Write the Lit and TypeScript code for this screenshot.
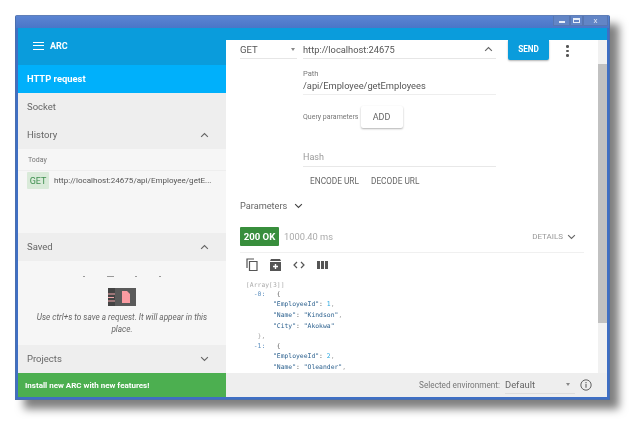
import { LitElement, html, css } from "lit";
import { customElement } from "lit/decorators.js";

const chev = (up: boolean, cls = "chev") => html`<svg class=${cls} viewBox="0 0 12 8"><path d=${up ? "M1.5 6.5 6 2l4.5 4.5" : "M1.5 1.5 6 6l4.5-4.5"} fill="none" stroke="currentColor" stroke-width="1.5"/></svg>`;

@customElement("app-root")
export class AppRoot extends LitElement {
  static styles = css`
    :host { display: block; width: 640px; height: 429px; background: #fff; padding: 15px 0 0 15px; box-sizing: border-box; overflow: hidden; font-family: Roboto, "Liberation Sans", sans-serif; color: #555; }
    .win { width: 595px; height: 385px; box-sizing: border-box; background: #3f6fc4; border: 1px solid #4a6fae; border-top-color: #5f7fb8; border-radius: 2px 2px 0 0; padding: 0 2px 2px 2px; display: flex; flex-direction: column; box-shadow: 9px 9px 9px rgba(0,0,0,.5); filter: blur(.4px); }
    .title { height: 12px; flex: none; display: flex; justify-content: flex-end; background: linear-gradient(#5b84d2, #4a76c8); margin: 0 -2px; padding-right: 1px; }
    .wbtn { height: 10px; background: #6285c6; border: 1px solid #5676b2; border-top: 0; box-sizing: border-box; display: flex; align-items: center; justify-content: center; color: #dfe7f5; font-size: 8px; line-height: 1; }
    .wbtn.min { width: 17px; } .wbtn.max { width: 13px; } .wbtn.cls { width: 25px; }
    .wbtn i { display: block; background: #e8eef8; }
    .wbtn.min i { width: 6px; height: 2px; margin-top: 3px; }
    .wbtn.max i { width: 7px; height: 5px; background: none; border: 1px solid #e8eef8; border-top-width: 2px; box-sizing: border-box; }
    .app { flex: 1; min-height: 0; display: flex; }
    .side { width: 208px; flex: none; display: flex; flex-direction: column; background: #f6f6f6; }
    .brand { height: 37px; flex: none; background: #0a9cdc; color: #fff; display: flex; align-items: center; padding: 0 0 1px 15px; gap: 6px; font-size: 9px; font-weight: 700; box-sizing: border-box; }
    .burger { width: 11px; height: 8px; border-top: 1.5px solid #fff; border-bottom: 1.5px solid #fff; position: relative; box-sizing: border-box; }
    .burger::after { content: ""; position: absolute; left: 0; right: 0; top: 1.75px; height: 1.5px; background: #fff; }
    .nav { height: 28px; flex: none; display: flex; align-items: center; justify-content: space-between; padding: 0 17px 1px 9px; background: #eee; font-size: 9.5px; color: #666; box-sizing: border-box; }
    .nav.active { background: #00b0fb; color: #fff; font-weight: 700; font-size: 9.4px; }
    .chev { width: 9px; height: 6px; color: #666; flex: none; display: block; }
    .hist { height: 84px; flex: none; box-sizing: border-box; }
    .today { height: 22px; box-sizing: border-box; border-bottom: 1px solid #eee; font-size: 7px; color: #777; display: flex; align-items: center; padding: 0 0 0 10px; }
    .item { display: flex; align-items: center; padding: 1px 0 0 9px; gap: 5px; font-size: 8.05px; color: #555; white-space: nowrap; }
    .badge { width: 22px; height: 17px; background: #d9ead9; color: #3f8f4f; font-size: 9px; display: flex; align-items: center; justify-content: center; border-radius: 1px; }
    .saved { height: 84px; flex: none; display: flex; flex-direction: column; align-items: center; color: #666; font-style: italic; font-size: 8.2px; line-height: 11.5px; text-align: center; padding: 14px 14px 0; box-sizing: border-box; }
    .marks { display: flex; height: 2px; width: 78px; justify-content: space-between; align-items: center; }
    .marks i { display: block; height: 1px; width: 2px; background: #999; }
    .marks i.w { width: 7px; }
    .pic { display: block; width: 28px; height: 18px; margin: 11px 0 6px; }
    .promo { flex: 1; background: #4caf50; color: #fff; font-size: 8px; font-weight: 700; display: flex; align-items: center; padding: 0 0 0 7px; }
    .main { flex: 1; min-width: 0; display: flex; flex-direction: column; background: #0a9cdc; }
    .band { height: 12px; flex: none; background: #0a9cdc; }
    .body { flex: 1; min-height: 0; display: flex; background: #fff; }
    .content { flex: 1; min-width: 0; overflow: hidden; padding-left: 14px; display: flex; flex-direction: column; align-items: flex-start; box-sizing: border-box; }
    .scroll { width: 9px; flex: none; background: #f1f1f1; padding-top: 24px; box-sizing: border-box; }
    .thumb { height: 259px; background: #c1c1c1; }
    .r1 { display: flex; height: 20px; flex: none; align-items: flex-start; }
    .sel { width: 57px; height: 19px; border-bottom: 1px solid #e6e6e6; box-sizing: border-box; display: flex; align-items: center; justify-content: space-between; font-size: 9.5px; padding-right: 2px; }
    .tri { width: 0; height: 0; border: 2.5px solid transparent; border-top: 3px solid #888; border-bottom: 0; display: block; }
    .url { width: 193px; height: 19px; margin-left: 6px; border-bottom: 1px solid #e6e6e6; box-sizing: border-box; display: flex; align-items: center; justify-content: space-between; font-size: 9.3px; padding-right: 3px; }
    .send { width: 41px; height: 20px; margin-left: 12px; background: #0a9cdc; color: #fff; border-radius: 0 0 2px 2px; font-size: 8.2px; font-weight: 700; display: flex; align-items: center; justify-content: center; box-shadow: 0 1px 2px rgba(0,0,0,.3); padding-bottom: 2px; box-sizing: border-box; }
    .kebab { width: 3px; margin: 5px 0 0 17px; display: flex; flex-direction: column; gap: 2px; }
    .kebab i { display: block; width: 2.6px; height: 2.6px; border-radius: 50%; background: #555; }
    .fields { margin-left: 63px; width: 193px; display: flex; flex-direction: column; }
    .lab { font-size: 7.5px; color: #777; margin-top: 9px; line-height: 9px; }
    .val { height: 17px; line-height: 15px; font-size: 9.3px; border-bottom: 1px solid #eee; box-sizing: border-box; }
    .qp { display: flex; align-items: center; height: 22px; margin-top: 11px; font-size: 7px; color: #777; }
    .add { width: 42px; height: 22px; margin-left: 2px; background: #fff; box-shadow: 0 1px 2px rgba(0,0,0,.3); border-radius: 2px; display: flex; align-items: center; justify-content: center; font-size: 9px; color: #666; }
    .hash { margin-top: 21px; height: 18px; line-height: 17px; font-size: 9px; color: #999; border-bottom: 1px solid #e8e8e8; box-sizing: border-box; }
    .enc { display: flex; gap: 12px; margin: 9px 0 0 7px; font-size: 8.3px; color: #666; line-height: 11px; }
    .params { display: flex; align-items: center; gap: 7px; font-size: 9.2px; color: #666; margin-top: 13px; line-height: 12px; }
    .params .chev { color: #444; }
    .status { width: 344px; height: 25px; margin-top: 15px; border-bottom: 1px solid #f0f0f0; display: flex; align-items: flex-start; font-size: 9.3px; color: #aaa; flex: none; box-sizing: content-box; }
    .ok { width: 39px; height: 19px; background: #388e3c; color: #fff; font-size: 9.6px; font-weight: 700; display: flex; align-items: center; justify-content: center; border-radius: 1px; margin-right: 5px; }
    .ms { line-height: 19px; }
    .det { margin-left: auto; margin-right: 8px; font-size: 8px; color: #999; display: flex; align-items: center; gap: 4px; height: 19px; }
    .det .chev { color: #666; }
    .tools { display: flex; align-items: center; gap: 12px; margin: 5px 0 0 6px; height: 13px; flex: none; color: #555; }
    .tools svg { display: block; flex: none; }
    .json { margin: 10px 0 0 6px; font-family: "DejaVu Sans Mono", "Liberation Mono", monospace; font-size: 6.4px; line-height: 10.8px; color: #666; }
    .json div { white-space: pre; }
    .json .h9 { line-height: 9px; }
    .k { color: #2f6390; } .n { color: #29a8e0; } .s { color: #2f6390; } .m { color: #aaa; } .i { color: #5c8fbf; } .b { color: #666; }
    .foot { height: 24px; flex: none; background: #eee; display: flex; align-items: center; justify-content: flex-end; font-size: 8.2px; color: #777; padding-right: 15px; box-sizing: border-box; }
    .env { width: 70px; height: 17px; margin: 0 5px; border-bottom: 1px solid #ddd; box-sizing: border-box; display: flex; align-items: center; justify-content: space-between; font-size: 9.4px; color: #666; padding-right: 5px; }
    .info { display: block; width: 12px; height: 12px; }
  `;

  render() {
    return html`
      <div class="win">
        <div class="title">
          <div class="wbtn min"><i></i></div><div class="wbtn max"><i></i></div><div class="wbtn cls">x</div>
        </div>
        <div class="app">
          <aside class="side">
            <div class="brand"><div class="burger"></div><span>ARC</span></div>
            <div class="nav active">HTTP request</div>
            <div class="nav">Socket</div>
            <div class="nav">History ${chev(true)}</div>
            <div class="hist">
              <div class="today">Today</div>
              <div class="item"><span class="badge">GET</span><span>http://localhost:24675/api/Employee/getE...</span></div>
            </div>
            <div class="nav">Saved ${chev(true)}</div>
            <div class="saved">
              <div class="marks"><i></i><i class="w"></i><i></i><i></i></div>
              <svg class="pic" viewBox="0 0 28 18">
                <rect width="28" height="18" fill="#5a5a5a"/>
                <rect width="7" height="18" fill="#444"/>
                <path d="M0 6h7M0 9.5h6M0 13h7" stroke="#f4a7ab" stroke-width="1.2"/>
                <path d="M14 3h5l3 3v9h-8z" fill="#fb9ca2"/>
              </svg>
              <div>Use ctrl+s to save a request. It will appear in this place.</div>
            </div>
            <div class="nav">Projects ${chev(false)}</div>
            <div class="promo">Install new ARC with new features!</div>
          </aside>
          <section class="main">
            <div class="band"></div>
            <div class="body">
              <div class="content">
                <div class="r1">
                  <div class="sel"><span>GET</span><i class="tri"></i></div>
                  <div class="url"><span>http://localhost:24675</span>${chev(true)}</div>
                  <div class="send">SEND</div>
                  <div class="kebab"><i></i><i></i><i></i></div>
                </div>
                <div class="fields">
                  <div class="lab">Path</div>
                  <div class="val">/api/Employee/getEmployees</div>
                  <div class="qp">Query parameters<div class="add">ADD</div></div>
                  <div class="hash">Hash</div>
                  <div class="enc"><span>ENCODE URL</span><span>DECODE URL</span></div>
                </div>
                <div class="params">Parameters ${chev(false)}</div>
                <div class="status">
                  <div class="ok">200 OK</div><div class="ms">1000.40 ms</div>
                  <div class="det">DETAILS ${chev(false)}</div>
                </div>
                <div class="tools">
                  <svg width="12" height="13" viewBox="0 0 12 13"><path d="M1 10V1h7M3.5 3.5h7.5v9H3.5z" fill="none" stroke="currentColor" stroke-width="1.2"/></svg>
                  <svg width="11" height="12" viewBox="0 0 11 12"><path d="M0 3h11v9H0zM1 0h9l1 2H0z" fill="#555"/><path d="M5.5 5v5M3 7.5h5" stroke="#fff" stroke-width="1.4"/></svg>
                  <svg width="12" height="8" viewBox="0 0 12 8"><path d="M4 1 1 4l3 3M8 1l3 3-3 3" fill="none" stroke="currentColor" stroke-width="1.2"/></svg>
                  <svg width="11" height="8" viewBox="0 0 11 8"><path d="M0 0h3v8H0zM4 0h3v8H4zM8 0h3v8H8z" fill="#555"/></svg>
                </div>
                <div class="json">
                  <div class="m h9">[Array[3]]</div>
                  <div class="i h9">  -0:   <span class="b">{</span></div>
                  <div>       <span class="k">"EmployeeId"</span>: <span class="n">1</span><span class="m">,</span></div>
                  <div>       <span class="k">"Name"</span>: <span class="s">"Kindson"</span><span class="m">,</span></div>
                  <div>       <span class="k">"City"</span>: <span class="s">"Akokwa"</span></div>
                  <div class="m">   },</div>
                  <div class="i h9">  -1:   <span class="b">{</span></div>
                  <div>       <span class="k">"EmployeeId"</span>: <span class="n">2</span><span class="m">,</span></div>
                  <div>       <span class="k">"Name"</span>: <span class="s">"Oleander"</span><span class="m">,</span></div>
                </div>
              </div>
              <div class="scroll"><div class="thumb"></div></div>
            </div>
            <div class="foot">Selected environment:
              <div class="env"><span>Default</span><i class="tri"></i></div>
              <svg class="info" viewBox="0 0 13 13"><circle cx="6.5" cy="6.5" r="5.6" fill="none" stroke="#555" stroke-width="1"/><path d="M6.5 5.5v4M6.5 3.3v1.2" stroke="#555" stroke-width="1.1"/></svg>
            </div>
          </section>
        </div>
      </div>
    `;
  }
}
